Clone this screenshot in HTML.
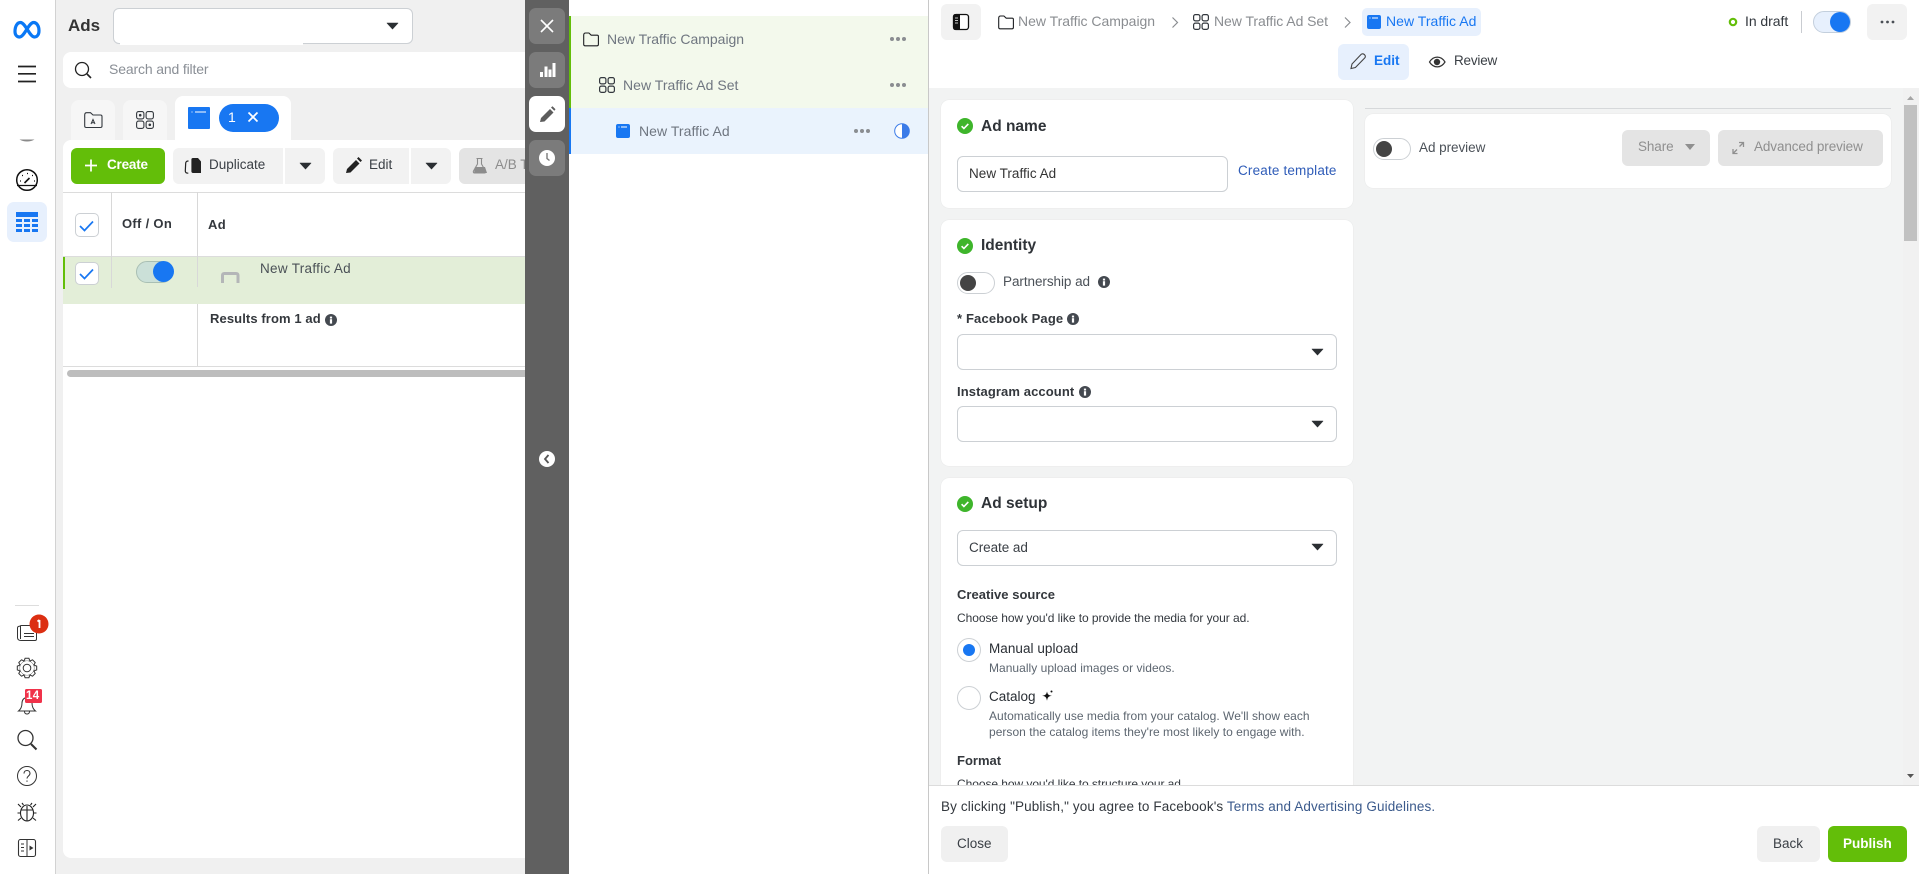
<!DOCTYPE html>
<html lang="en"><head><meta charset="utf-8"><title>Ads Manager</title>
<style>
html,body{margin:0;padding:0;width:1921px;height:874px;overflow:hidden;background:#f0f0f0;font-family:"Liberation Sans",sans-serif;color:#1c2b33}
.b{position:absolute;box-sizing:border-box}
.t{position:absolute;white-space:nowrap;height:20px;line-height:20px;font-size:14px}
.g{color:#6f7680}
.h{font-weight:700;font-size:15.5px;color:#2f3338}
.l{font-weight:700;font-size:13px;color:#34383d}
.s{font-size:12px;color:#5d6670}
.sel{background:#fff;border:1px solid #ccd0d4;border-radius:6px}
.btn{background:#f2f2f2;border-radius:6px}
.dis{background:#e4e4e4;border-radius:6px}
svg{position:absolute;left:0;top:0}
</style></head><body>

<!-- left rail -->
<div class="b" style="left:0;top:0;width:55px;height:874px;background:#fff;border-right:0"></div>
<div class="b" style="left:55px;top:0;width:1px;height:874px;background:#d2d2d2"></div>
<div class="b" style="left:7px;top:202px;width:40px;height:40px;background:#e7f0fd;border-radius:7px"></div>
<div class="b" style="left:15px;top:605px;width:24px;height:1px;background:#ddd"></div>

<!-- header -->
<div class="t" style="left:68px;top:16px;font-size:17px;font-weight:700;color:#333">Ads</div>
<div class="b sel" style="left:113px;top:8px;width:300px;height:36px"></div>
<div class="b" style="left:120px;top:42px;width:183px;height:3px;background:#fff"></div>
<div class="b" style="left:63px;top:52px;width:470px;height:36px;background:#fff;border-radius:8px"></div>
<div class="t" style="left:109px;top:59px;color:#8a8f96;letter-spacing:-.15px">Search and filter</div>

<!-- tabs -->
<div class="b" style="left:71px;top:100px;width:44px;height:42px;background:#f6f6f6;border-radius:8px 8px 0 0"></div>
<div class="b" style="left:123px;top:100px;width:44px;height:42px;background:#f6f6f6;border-radius:8px 8px 0 0"></div>
<div class="b" style="left:175px;top:96px;width:116px;height:46px;background:#fff;border-radius:8px 8px 0 0"></div>
<div class="b" style="left:219px;top:104px;width:60px;height:28px;background:#1877f2;border-radius:14px"></div>
<div class="t" style="left:228px;top:107px;color:#fff;font-size:14px">1</div>

<!-- table panel -->
<div class="b" style="left:63px;top:140px;width:470px;height:718px;background:#fff;border-radius:8px"></div>
<div class="b" style="left:71px;top:148px;width:94px;height:36px;background:#63be09;border-radius:6px"></div>
<div class="t" style="left:107px;top:155px;color:#fff;font-weight:700;font-size:13.5px;letter-spacing:-.2px">Create</div>
<div class="b btn" style="left:173px;top:148px;width:110px;height:36px;border-radius:6px 0 0 6px"></div>
<div class="b btn" style="left:285px;top:148px;width:40px;height:36px;border-radius:0 6px 6px 0"></div>
<div class="t" style="left:209px;top:155px;font-size:13.5px;color:#3a3f45;letter-spacing:0">Duplicate</div>
<div class="b btn" style="left:333px;top:148px;width:76px;height:36px;border-radius:6px 0 0 6px"></div>
<div class="b btn" style="left:411px;top:148px;width:40px;height:36px;border-radius:0 6px 6px 0"></div>
<div class="t" style="left:369px;top:155px;font-size:13.5px;color:#3a3f45">Edit</div>
<div class="b dis" style="left:459px;top:148px;width:80px;height:36px"></div>
<div class="t" style="left:495px;top:155px;font-size:13.5px;color:#8c8c8c">A/B Test</div>

<div class="b" style="left:63px;top:192px;width:470px;height:1px;background:#dcdcdc"></div>
<div class="b" style="left:63px;top:256px;width:470px;height:1px;background:#dcdcdc"></div>
<div class="b" style="left:63px;top:257px;width:470px;height:47px;background:#e3eed8"></div>
<div class="b" style="left:63px;top:257px;width:2px;height:32px;background:#63be09"></div>
<div class="b" style="left:111px;top:192px;width:1px;height:96px;background:#d8d8d8"></div>
<div class="b" style="left:197px;top:192px;width:1px;height:95px;background:#d8d8d8"></div>
<div class="b" style="left:197px;top:304px;width:1px;height:62px;background:#d8d8d8"></div>
<div class="b" style="left:63px;top:366px;width:470px;height:1px;background:#dcdcdc"></div>
<div class="b" style="left:67px;top:370px;width:470px;height:7px;background:#bdbdbd;border-radius:4px"></div>
<div class="b" style="left:75px;top:213px;width:24px;height:24px;background:#fff;border:1px solid #ccd0d4;border-radius:5px"></div>
<div class="b" style="left:75px;top:262px;width:24px;height:23px;background:#fff;border:1px solid #ccd0d4;border-radius:5px"></div>
<div class="t" style="left:122px;top:214px;font-size:13px;font-weight:700;color:#34383d;letter-spacing:.3px">Off / On</div>
<div class="t" style="left:208px;top:215px;font-size:13px;font-weight:700;color:#34383d;letter-spacing:.4px">Ad</div>
<div class="b" style="left:136px;top:261px;width:37px;height:22px;background:#cbe0d8;border:1px solid #a9bfb4;border-radius:11px"></div>
<div class="b" style="left:153px;top:261px;width:21px;height:21px;background:#1877f2;border-radius:50%"></div>
<div class="t" style="left:260px;top:259px;color:#4a5056;font-size:13.5px;letter-spacing:.3px">New Traffic Ad</div>
<div class="t" style="left:210px;top:309px;font-size:13px;font-weight:700;color:#34383d;letter-spacing:.1px">Results from 1 ad</div>

<!-- dark tool column -->
<div class="b" style="left:525px;top:0;width:44px;height:874px;background:#606060"></div>
<div class="b" style="left:529px;top:8px;width:36px;height:36px;background:#7b7b7b;border-radius:7px"></div>
<div class="b" style="left:529px;top:52px;width:36px;height:36px;background:#7b7b7b;border-radius:7px"></div>
<div class="b" style="left:529px;top:96px;width:36px;height:36px;background:#fff;border-radius:7px"></div>
<div class="b" style="left:529px;top:140px;width:36px;height:36px;background:#7b7b7b;border-radius:7px"></div>
<div class="b" style="left:539px;top:451px;width:16px;height:16px;background:#fff;border-radius:50%"></div>

<!-- tree panel -->
<div class="b" style="left:569px;top:0;width:360px;height:874px;background:#fff;border-right:1px solid #c8c8c8"></div>
<div class="b" style="left:569px;top:16px;width:359px;height:92px;background:#f3f9ec;border-left:2px solid #63be09"></div>
<div class="b" style="left:569px;top:108px;width:359px;height:46px;background:#eaf3fd;border-left:2px solid #1877f2"></div>
<div class="t g" style="left:607px;top:29px;letter-spacing:-.02px">New Traffic Campaign</div>
<div class="t g" style="left:623px;top:75px;letter-spacing:.03px">New Traffic Ad Set</div>
<div class="t g" style="left:639px;top:121px;letter-spacing:.05px">New Traffic Ad</div>

<!-- right pane -->
<div class="b" style="left:929px;top:0;width:992px;height:874px;background:#fff"></div>
<div class="b" style="left:929px;top:88px;width:990px;height:697px;background:#f2f3f3"></div>
<div class="b" style="left:1903px;top:88px;width:16px;height:697px;background:#f1f1f1"></div>
<div class="b" style="left:1904px;top:105px;width:13px;height:136px;background:#c1c1c1"></div>

<div class="b btn" style="left:941px;top:4px;width:40px;height:36px"></div>
<div class="t" style="left:1018px;top:11px;color:#8a8d91;letter-spacing:-.02px">New Traffic Campaign</div>
<div class="t" style="left:1214px;top:11px;color:#8a8d91;letter-spacing:-.05px">New Traffic Ad Set</div>
<div class="b" style="left:1362px;top:8px;width:119px;height:28px;background:#e7f0fd;border-radius:5px"></div>
<div class="t" style="left:1386px;top:11px;color:#1877f2;letter-spacing:.03px">New Traffic Ad</div>
<div class="t" style="left:1745px;top:11px;color:#33383e;letter-spacing:-.05px">In draft</div>
<div class="b" style="left:1801px;top:11px;width:1px;height:22px;background:#c9ccd1"></div>
<div class="b" style="left:1813px;top:11px;width:38px;height:22px;background:#e7f0fd;border:1px solid #c3cfdd;border-radius:11px"></div>
<div class="b" style="left:1830px;top:12px;width:20px;height:20px;background:#1877f2;border-radius:50%"></div>
<div class="b btn" style="left:1867px;top:4px;width:40px;height:36px"></div>
<div class="b" style="left:1338px;top:44px;width:71px;height:36px;background:#e7f0fd;border-radius:6px"></div>
<div class="t" style="left:1374px;top:51px;color:#1877f2;font-weight:700;font-size:13.5px">Edit</div>
<div class="t" style="left:1454px;top:51px;color:#3a3f45;font-size:13.5px;letter-spacing:-.2px">Review</div>

<!-- card: Ad name -->
<div class="b" style="left:941px;top:100px;width:412px;height:108px;background:#fff;border-radius:8px;box-shadow:0 0 1px rgba(0,0,0,.12)"></div>
<div class="t h" style="left:981px;top:116px;margin-top:1px">Ad name</div>
<div class="b sel" style="left:957px;top:156px;width:271px;height:36px"></div>
<div class="t" style="left:969px;top:164px;font-size:13.5px;color:#333;letter-spacing:.03px">New Traffic Ad</div>
<div class="t" style="left:1238px;top:161px;font-size:13.5px;color:#2f5cb8;letter-spacing:.17px">Create template</div>

<!-- card: Identity -->
<div class="b" style="left:941px;top:220px;width:412px;height:246px;background:#fff;border-radius:8px;box-shadow:0 0 1px rgba(0,0,0,.12)"></div>
<div class="t h" style="left:981px;top:236px">Identity</div>
<div class="b" style="left:957px;top:272px;width:38px;height:22px;background:#fff;border:1px solid #ccd0d4;border-radius:11px"></div>
<div class="b" style="left:960px;top:275px;width:16px;height:16px;background:#444;border-radius:50%"></div>
<div class="t" style="left:1003px;top:272px;font-size:13.5px;color:#4b5158;letter-spacing:-.06px">Partnership ad</div>
<div class="t l" style="left:957px;top:309px;letter-spacing:.15px">* Facebook Page</div>
<div class="b sel" style="left:957px;top:334px;width:380px;height:36px"></div>
<div class="t l" style="left:957px;top:382px;letter-spacing:.1px">Instagram account</div>
<div class="b sel" style="left:957px;top:406px;width:380px;height:36px"></div>

<!-- card: Ad setup -->
<div class="b" style="left:941px;top:478px;width:412px;height:320px;background:#fff;border-radius:8px 8px 0 0;box-shadow:0 0 1px rgba(0,0,0,.12)"></div>
<div class="t h" style="left:981px;top:494px">Ad setup</div>
<div class="b sel" style="left:957px;top:530px;width:380px;height:36px"></div>
<div class="t" style="left:969px;top:537px;margin-top:1px;font-size:13.5px;color:#3a3f45;letter-spacing:-.05px">Create ad</div>
<div class="t l" style="left:957px;top:585px;letter-spacing:.03px">Creative source</div>
<div class="t s" style="left:957px;top:608px;color:#33383e;letter-spacing:-.06px">Choose how you'd like to provide the media for your ad.</div>
<div class="b" style="left:957px;top:638px;width:24px;height:24px;background:#fff;border:1px solid #ccd0d4;border-radius:50%"></div>
<div class="b" style="left:963px;top:644px;width:12px;height:12px;background:#1877f2;border-radius:50%"></div>
<div class="t" style="left:989px;top:639px;font-size:13.5px;color:#2a2f35;letter-spacing:.05px">Manual upload</div>
<div class="t s" style="left:989px;top:658px;letter-spacing:.03px">Manually upload images or videos.</div>
<div class="b" style="left:957px;top:686px;width:24px;height:24px;background:#fff;border:1px solid #ccd0d4;border-radius:50%"></div>
<div class="t" style="left:989px;top:687px;font-size:13.5px;color:#2a2f35">Catalog</div>
<div class="t s" style="left:989px;top:706px;letter-spacing:.03px">Automatically use media from your catalog. We'll show each</div>
<div class="t s" style="left:989px;top:722px;letter-spacing:.03px">person the catalog items they're most likely to engage with.</div>
<div class="t l" style="left:957px;top:751px">Format</div>
<div class="t s" style="left:957px;top:774px;color:#33383e;letter-spacing:-.06px">Choose how you'd like to structure your ad.</div>

<!-- preview -->
<div class="b" style="left:1365px;top:108px;width:526px;height:1px;background:#d6d8da"></div>
<div class="b" style="left:1365px;top:114px;width:526px;height:74px;background:#fff;border-radius:8px;box-shadow:0 0 1px rgba(0,0,0,.12)"></div>
<div class="b" style="left:1373px;top:138px;width:38px;height:22px;background:#fff;border:1px solid #ccd0d4;border-radius:11px"></div>
<div class="b" style="left:1376px;top:141px;width:16px;height:16px;background:#444;border-radius:50%"></div>
<div class="t" style="left:1419px;top:138px;font-size:13.5px;color:#4b5158;letter-spacing:-.05px">Ad preview</div>
<div class="b dis" style="left:1622px;top:130px;width:88px;height:36px"></div>
<div class="t" style="left:1638px;top:137px;font-size:13.5px;color:#8f8f8f;letter-spacing:-.1px">Share</div>
<div class="b dis" style="left:1718px;top:130px;width:165px;height:36px"></div>
<div class="t" style="left:1754px;top:137px;font-size:13.5px;color:#8f8f8f;letter-spacing:-.1px">Advanced preview</div>

<!-- footer -->
<div class="b" style="left:929px;top:785px;width:992px;height:89px;background:#fff;border-top:1px solid #dcdcdc"></div>
<div class="t" style="left:941px;top:797px;font-size:13.5px;color:#33383e;letter-spacing:.13px">By clicking "Publish," you agree to Facebook's <span style="color:#3b5a8c">Terms and Advertising Guidelines.</span></div>
<div class="b btn" style="left:941px;top:826px;width:67px;height:36px;background:#f0f0f0"></div>
<div class="t" style="left:957px;top:834px;font-size:13.5px;color:#3a3f45">Close</div>
<div class="b btn" style="left:1757px;top:826px;width:63px;height:36px;background:#f0f0f0"></div>
<div class="t" style="left:1773px;top:834px;font-size:13.5px;color:#3a3f45">Back</div>
<div class="b" style="left:1828px;top:826px;width:79px;height:36px;background:#63be09;border-radius:6px"></div>
<div class="t" style="left:1843px;top:834px;font-size:13.5px;font-weight:700;color:#fff">Publish</div>
<div class="b" style="left:1919px;top:0;width:2px;height:874px;background:#fff"></div>

<!-- icons -->
<svg width="1921" height="874" viewBox="0 0 1921 874" fill="none">
<defs>
<g id="dn"><path d="M0 0h11L5.500 6z" fill="#2b2f33" stroke="#2b2f33" stroke-width=".6" stroke-linejoin="round"/></g>
<g id="ok"><circle cx="8" cy="8" r="8" fill="#3eb52b"/><path d="M4.600 8.200l2.300 2.300 4.400-4.600" stroke="#fff" stroke-width="1.600"/></g>
<g id="inf"><circle cx="6" cy="6" r="6" fill="#444950"/><rect x="4.900" y="5.200" width="2.200" height="4.400" fill="#fff"/><rect x="4.900" y="2.600" width="2.200" height="1.900" fill="#fff"/></g>
<g id="ad"><rect width="14" height="14" rx="2" fill="#1877f2"/><path d="M2.500 3h1M5 3h6" stroke="#fff" stroke-width=".9"/></g>
<g id="set" stroke="#33383e" stroke-width="1.200"><rect x=".6" y=".6" width="6.300" height="6.300" rx="1.800"/><rect x="9.100" y=".6" width="6.300" height="6.300" rx="1.800"/><rect x=".6" y="9.100" width="6.300" height="6.300" rx="1.800"/><rect x="9.100" y="9.100" width="6.300" height="6.300" rx="1.800"/></g>
<g id="folder"><path d="M.7 3.200C.7 1.600 1.400 1 2.600 1h3.300l2.300 2.200h6c.8 0 1.200.5 1.200 1.200v8c0 .9-.5 1.400-1.400 1.400H2.100c-.9 0-1.400-.5-1.400-1.400z" stroke="#1c1e21" stroke-width="1.100"/></g>
<g id="dots" fill="#8a8d91"><circle cx="2" cy="2" r="2"/><circle cx="8" cy="2" r="2"/><circle cx="14" cy="2" r="2"/></g>
<g id="tick"><path d="M0 6l4.500 4.500L13 1.500" stroke="#1877f2" stroke-width="1.700"/></g>
<path id="tooth" d="M-2.800 -7.300L-1.900 -9.700H1.900L2.800 -7.300" fill="#fff" stroke="#333" stroke-width="1"/>
</defs>

<!-- rail icons -->
<path d="M15 31.500c0-5.500 2.400-9 5.400-9 5 0 9.200 14.500 14 14.500 2.600 0 4.600-2.300 4.600-6.400 0-4.800-2.400-8.100-5.400-8.100-5 0-9.200 14.500-14 14.500-2.800 0-4.600-2.200-4.600-5.500z" stroke="#0a78f5" stroke-width="3.200"/>
<path d="M18 66.500h18M18 73.800h18M18 81.500h18" stroke="#222" stroke-width="1.700"/>
<path d="M19.500 139.500c4 2.600 11 2.600 15 0z" fill="#8a8a8a"/>
<circle cx="27" cy="180" r="10.300" stroke="#111" stroke-width="1.500"/>
<path d="M17 185.500h20" stroke="#111" stroke-width="1.200"/><path d="M24.500 183l5-5" stroke="#111" stroke-width="1.600"/>
<path d="M20 181h1M22 175.500h1M27 173.500h1M32 175.500h1M34 181h1" stroke="#111" stroke-width="1.200"/>
<rect x="16" y="212" width="22" height="5" fill="#1877f2"/>
<g fill="#1877f2"><rect x="16" y="219" width="6" height="3"/><rect x="24" y="219" width="6" height="3"/><rect x="32" y="219" width="6" height="3"/><rect x="16" y="224" width="6" height="3"/><rect x="24" y="224" width="6" height="3"/><rect x="32" y="224" width="6" height="3"/><rect x="16" y="229" width="6" height="3"/><rect x="24" y="229" width="6" height="3"/><rect x="32" y="229" width="6" height="3"/></g>

<g stroke="#333" stroke-width="1">
<path d="M21 625.500h14c1 0 1.500.5 1.500 1.500v12c0 1-.5 1.500-1.500 1.500H21c-2.500 0-3.500-1-3.500-3v-9.500c0-1 .8-1.800 2-1.800z"/><path d="M20.500 626v13M24 633.500h10M24 636.500h10"/>
<circle cx="27" cy="668" r="7.500"/>
<g transform="translate(27 668)"><use href="#tooth"/><use href="#tooth" transform="rotate(45)"/><use href="#tooth" transform="rotate(90)"/><use href="#tooth" transform="rotate(135)"/><use href="#tooth" transform="rotate(180)"/><use href="#tooth" transform="rotate(225)"/><use href="#tooth" transform="rotate(270)"/><use href="#tooth" transform="rotate(315)"/></g>
<circle cx="27" cy="668" r="3.800"/>
<path d="M22 703c0-3 2-5.500 5-5.500s5 2.500 5 5.500c0 3 1 6 3.500 8h-17C21 709 22 706 22 703zM24.500 711.500c0 3.400 5 3.400 5 0"/>
<circle cx="25.500" cy="738" r="7.500" stroke-width="1.300"/>
</g>
<path d="M31 744l5.500 5.500" stroke="#333" stroke-width="2"/>
<circle cx="27" cy="776" r="9.500" stroke="#333" stroke-width="1"/>
<path d="M24 773.500c0-4 6-4 6 0 0 2.500-3 2.500-3 5M27 780.500v1.200" stroke="#333" stroke-width="1.100"/>
<g stroke="#222" stroke-width="1.100">
<ellipse cx="27" cy="813" rx="6.500" ry="8"/><path d="M27 806v15M20.500 810h13M21 807l-3-3M33 807l3-3M20.500 813h-3M33.500 813h3M21 818l-3 2.500M33 818l3 2.500M23.500 805l-1.500-2M30.500 805l1.500-2"/>
</g>
<rect x="18.500" y="839.500" width="17" height="17" rx="2" stroke="#333" stroke-width="1.100"/>
<path d="M27 839.500v17M21 844h3M21 847.500h3M21 851h3" stroke="#333"/><path d="M29.500 845.500l4 2.500-4 2.500z" fill="#333"/>
<circle cx="39" cy="624" r="9.500" fill="#dc2f12"/>
<path d="M39.500 620v8M37.500 621.500l2-1.500" stroke="#fff" stroke-width="1.800"/>
<rect x="25" y="689" width="17" height="14" rx="1.500" fill="#f0324a"/>

<!-- header -->
<use href="#dn" x="387" y="23"/>
<circle cx="82" cy="69" r="6.500" stroke="#222" stroke-width="1.300"/><path d="M87 74l4 4" stroke="#222" stroke-width="1.600"/>

<!-- tabs -->
<path d="M84.700 115c0-1.500.7-2.300 2-2.300h3.800l2.500 2.300h7.500c1 0 1.500.5 1.500 1.500v9.500c0 1-.5 1.500-1.500 1.500H86.200c-1 0-1.500-.5-1.500-1.500z" stroke="#33383e" stroke-width="1.100"/><path d="M91 124l2-4.500 2 4.500M91.700 122.800h2.600" stroke="#33383e"/>
<g stroke="#33383e" stroke-width="1.100"><rect x="136.600" y="111.600" width="7.300" height="7.300" rx="2"/><rect x="146.100" y="111.600" width="7.300" height="7.300" rx="2"/><rect x="136.600" y="121.100" width="7.300" height="7.300" rx="2"/><rect x="146.100" y="121.100" width="7.300" height="7.300" rx="2"/></g>
<circle cx="140.200" cy="115.200" r="1.300" fill="#33383e"/><circle cx="149.800" cy="124.800" r="1.300" fill="#33383e"/>
<rect x="188" y="107" width="22" height="22" rx="1" fill="#1877f2"/><path d="M191.500 112h1M195 112h11" stroke="#fff" stroke-width="1"/>
<path d="M248.500 112.500l9 9M257.500 112.500l-9 9" stroke="#fff" stroke-width="1.700"/>

<!-- toolbar -->
<path d="M91 159.500v12M85 165.500h12" stroke="#fff" stroke-width="1.700"/>
<path d="M193 158h5l3 3.500V173h-8c-1 0-1.600-.6-1.600-1.600V159.600c0-1 .6-1.600 1.600-1.600z" fill="#222"/><path d="M188.500 161c-2.500 0-2.500 1-2.800 2l-.4 8c0 1.500 1 2.200 3 2.200" stroke="#222" stroke-width="1.200"/>
<use href="#dn" x="300" y="163"/>
<path d="M346 173l1-4 9-9 3.500 3.500-9 9zM357 158.500l1.500-1.500 3.500 3.500-1.500 1.500z" fill="#222"/>
<use href="#dn" x="426" y="163"/>
<path d="M476.500 158.500h6M477.500 159v5l-4 7c-.5 1 0 2 1 2h10c1 0 1.500-1 1-2l-4-7v-5" stroke="#8c8c8c" stroke-width="1.100"/><path d="M475 167h10l2 6h-13z" fill="#8c8c8c"/>

<!-- table -->
<g transform="translate(80 220)"><use href="#tick"/></g>
<g transform="translate(80 268)"><use href="#tick"/></g>
<path d="M222.500 283v-7.500c0-1.500.5-2 2-2h11.500c1.500 0 2 .5 2 2v7.500" stroke="#b4b6b8" stroke-width="3"/>
<use href="#inf" x="325" y="314"/>

<!-- tool column -->
<path d="M541 20l12 12M553 20l-12 12" stroke="#fff" stroke-width="1.600"/>
<rect x="540" y="72" width="3" height="5" fill="#fff"/><rect x="544.500" y="66.500" width="3" height="10.500" fill="#fff"/><rect x="548.500" y="69.500" width="3" height="7.500" fill="#fff"/><rect x="552.500" y="63" width="3" height="14" fill="#fff"/>
<path d="M540 122l1-4 9-9 3.500 3.500-9 9z" fill="#5c5c5c"/><path d="M551 107.500l1.500-1.200 3 3-1.200 1.500z" fill="#5c5c5c"/>
<circle cx="547" cy="158" r="8" fill="#fff"/><path d="M547 153v5.500l2.500 2" stroke="#7b7b7b" stroke-width="1.400"/>
<path d="M548.500 455l-3.500 4 3.500 4" stroke="#555" stroke-width="1.800"/>

<!-- tree -->
<use href="#folder" x="583" y="32"/>
<use href="#set" x="599" y="77"/>
<use href="#ad" x="616" y="124"/>
<use href="#dots" x="890" y="37"/>
<use href="#dots" x="890" y="83"/>
<use href="#dots" x="854" y="129"/>
<circle cx="902" cy="131" r="7.300" fill="#fff" stroke="#3b7be8" stroke-width="1"/><path d="M902 123.700a7.300 7.300 0 0 1 0 14.600z" fill="#3b7be8"/>

<!-- top bar -->
<rect x="953.500" y="14.500" width="15" height="15" rx="2.500" fill="#fff" stroke="#111" stroke-width="1.300"/>
<path d="M953 16.500c0-1.500 1-2.500 2.500-2.500H960v16h-4.500c-1.500 0-2.500-1-2.500-2.500z" fill="#111"/><path d="M955 18h3M955 20.500h3M955 23h3" stroke="#fff" stroke-width=".8"/>
<use href="#folder" x="998" y="15"/>
<path d="M1172.500 17.500l5 5-5 5M1345 17.500l5 5-5 5" stroke="#8a8d91" stroke-width="1.200"/>
<use href="#set" x="1193" y="14"/>
<use href="#ad" x="1367" y="15"/>
<circle cx="1733" cy="22" r="3.200" fill="#fff" stroke="#63be09" stroke-width="2.200"/>
<g fill="#4a4f55"><circle cx="1882" cy="22" r="1.400"/><circle cx="1887.500" cy="22" r="1.400"/><circle cx="1893" cy="22" r="1.400"/></g>
<path d="M1351 68.500l1-4.500 9-9.500c1-1 2.500-.8 3.500.2 1 1 1.200 2.300.2 3.300l-9.300 9.500z" stroke="#444" stroke-width="1.100"/>
<path d="M1429.500 62c4-6.500 11.500-6.500 15.500 0-4 6.500-11.500 6.500-15.500 0z" stroke="#333" stroke-width="1.200"/><circle cx="1437" cy="62" r="3.200" fill="#333"/>

<!-- cards -->
<use href="#ok" x="957" y="118"/>
<use href="#ok" x="957" y="238"/>
<use href="#ok" x="957" y="496"/>
<use href="#inf" x="1098" y="276"/>
<use href="#inf" x="1067" y="313"/>
<use href="#inf" x="1079" y="386"/>
<use href="#dn" x="1312" y="349"/>
<use href="#dn" x="1312" y="421"/>
<use href="#dn" x="1312" y="544"/>
<path d="M1047 691.500c.7 3 1.300 3.700 5 4.300-3.700.7-4.300 1.300-5 5-.7-3.700-1.300-4.300-5-5 3.700-.6 4.300-1.300 5-4.300z" fill="#111"/><circle cx="1051.500" cy="691.500" r="1" fill="#111"/>

<!-- preview -->
<path d="M1685 144h10l-5 6z" fill="#8f8f8f"/>
<path d="M1733 149v4.500h4.500M1733 153.500l4-4M1743.500 147v-4.500h-4.500M1743.500 142.500l-4 4" stroke="#8f8f8f" stroke-width="1.300"/>

<!-- scrollbar arrows -->
<path d="M1907 100l3.500-4 3.500 4z" fill="#a5a5a5"/>
<path d="M1907 774h7l-3.500 4z" fill="#555"/>
</svg>
<div class="t" style="left:26px;top:686px;font-size:11.5px;font-weight:700;color:#fff;letter-spacing:.3px">14</div>
</body></html>
